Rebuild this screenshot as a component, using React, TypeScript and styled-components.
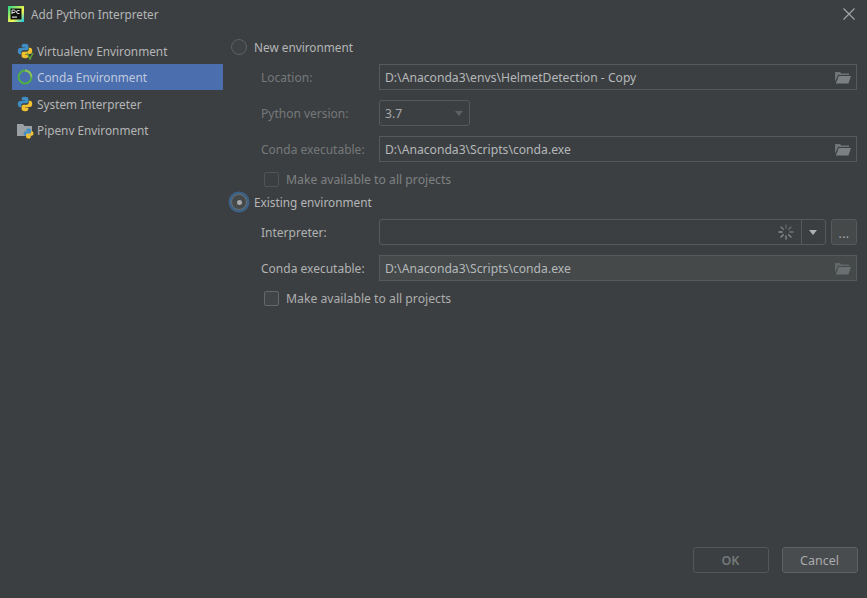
import React from 'react';
import styled, { createGlobalStyle } from 'styled-components';

const GlobalStyle = createGlobalStyle`
  html, body {
    margin: 0;
    padding: 0;
    background: #3c3f41;
  }
  * {
    box-sizing: border-box;
  }
`;

const Dialog = styled.div`
  width: 867px;
  height: 598px;
  display: flex;
  flex-direction: column;
  background: #3c3f41;
  color: #bbbbbb;
  font-family: 'Noto Sans', 'Open Sans', sans-serif;
  font-size: 12px;
  overflow: hidden;
`;

const TitleBar = styled.div`
  height: 38px;
  flex: none;
  display: flex;
  align-items: center;
  padding: 0 12px 10px 8px;
  gap: 7px;
`;

const Title = styled.span`
  flex: 1;
  font-size: 11.7px;
  color: #b4b6b7;
`;

const Body = styled.div`
  flex: 1;
  display: flex;
  min-height: 0;
`;

const Sidebar = styled.ul`
  width: 210.5px;
  margin: -0.4px 0 0 12px;
  padding: 0;
  list-style: none;
  flex: none;
`;

const SidebarItem = styled.li<{ $selected?: boolean }>`
  height: 26.4px;
  display: flex;
  align-items: center;
  gap: 4px;
  padding-left: 4px;
  font-size: 11.8px;
  background: ${(p) => (p.$selected ? '#4b6eaf' : 'transparent')};
  color: ${(p) => (p.$selected ? '#c0cadb' : '#b4b6b7')};
`;

const Main = styled.div`
  flex: 1;
  padding: 0 10px 0 8.5px;
  display: flex;
  flex-direction: column;
`;

const RadioRow = styled.label`
  display: flex;
  align-items: center;
  gap: 7px;
  height: 18px;
  font-size: 11.8px;
  color: #b4b6b7;
`;

const Radio = styled.span<{ $checked?: boolean }>`
  width: 16px;
  height: 16px;
  flex: none;
  border-radius: 50%;
  display: flex;
  align-items: center;
  justify-content: center;
  border: 1px solid ${(p) => (p.$checked ? '#6b6f71' : '#5e6162')};
  background: ${(p) => (p.$checked ? '#45494a' : '#3f4244')};
  box-shadow: ${(p) => (p.$checked ? '0 0 0 2.5px #3d6185' : 'none')};
  &::after {
    content: '';
    display: ${(p) => (p.$checked ? 'block' : 'none')};
    width: 5px;
    height: 5px;
    border-radius: 50%;
    background: #a8a9aa;
  }
`;

const Group = styled.div`
  display: grid;
  grid-template-columns: 118px 1fr;
  row-gap: 10px;
  margin-top: 8px;
  padding-left: 30px;
  align-items: center;
`;

const Label = styled.span<{ $disabled?: boolean }>`
  color: ${(p) => (p.$disabled ? '#74787a' : '#b0b2b3')};
`;

const Field = styled.div<{ $disabled?: boolean }>`
  height: 26px;
  display: flex;
  align-items: center;
  padding: 0 5px;
  font-size: 12.15px;
  border: 1px solid #565a5b;
  background: ${(p) => (p.$disabled ? '#3c3f41' : '#45494a')};
  color: #b4b8ba;
`;

const FieldText = styled.span`
  flex: 1;
`;

const VersionSelect = styled.div`
  width: 91px;
  height: 26px;
  display: flex;
  align-items: center;
  justify-content: space-between;
  padding: 0 5px;
  font-size: 12.15px;
  border: 1px solid #565a5b;
  border-radius: 3px;
  color: #a6a9ab;
`;

const Caret = styled.span<{ $color?: string }>`
  width: 0;
  height: 0;
  margin-right: 1px;
  border-left: 4.5px solid transparent;
  border-right: 4.5px solid transparent;
  border-top: 5px solid ${(p) => p.$color ?? '#5d6162'};
`;

const InterpreterRow = styled.div`
  display: flex;
  gap: 5px;
`;

const InterpreterCombo = styled.div`
  flex: 1;
  height: 26px;
  display: flex;
  align-items: center;
  border: 1px solid #565a5b;
  border-radius: 3px;
`;

const ComboInput = styled.div`
  flex: 1;
  height: 100%;
  display: flex;
  align-items: center;
  justify-content: flex-end;
  padding-right: 7px;
  border-right: 1px solid #565a5b;
`;

const ComboArrow = styled.div`
  width: 23px;
  display: flex;
  justify-content: center;
`;

const MoreButton = styled.button`
  width: 26px;
  height: 26px;
  padding: 0 0 4px;
  border: 1px solid #565a5b;
  border-radius: 3px;
  background: #45494a;
  color: #a9adaf;
  font: inherit;
  font-size: 12px;
  line-height: 1;
  display: flex;
  align-items: flex-end;
  justify-content: center;
  letter-spacing: 0.5px;
`;

const CheckRow = styled.label<{ $disabled?: boolean }>`
  display: flex;
  align-items: center;
  gap: 7px;
  height: 18px;
  margin: 8px 0 0 33px;
  font-size: 12.2px;
  color: ${(p) => (p.$disabled ? '#7d8183' : '#acaeaf')};
`;

const Checkbox = styled.span<{ $disabled?: boolean }>`
  width: 15px;
  height: 15px;
  border-radius: 2px;
  border: 1px solid ${(p) => (p.$disabled ? '#505354' : '#64686a')};
  background: ${(p) => (p.$disabled ? '#3c3f41' : '#424547')};
`;

const Spacer = styled.div<{ $h: number }>`
  height: ${(p) => p.$h}px;
  flex: none;
`;

const Footer = styled.div`
  height: 38px;
  flex: none;
  display: flex;
  justify-content: flex-end;
  gap: 13px;
  padding: 0 9.5px 0 0;
  margin-bottom: 13px;
`;

const DialogButton = styled.button<{ $disabled?: boolean }>`
  width: 76px;
  height: 26px;
  border-radius: 3px;
  border: 1px solid ${(p) => (p.$disabled ? '#54585a' : '#5e6264')};
  background: ${(p) => (p.$disabled ? '#3c3f41' : '#494c4e')};
  color: ${(p) => (p.$disabled ? '#74787a' : '#a9abad')};
  font: inherit;
  font-size: 12.5px;
  font-weight: ${(p) => (p.$disabled ? 600 : 400)};
`;

const IconBox = styled.span`
  position: relative;
  width: 17px;
  height: 17px;
  flex: none;
  display: flex;
  align-items: center;
  justify-content: center;
  & > svg + svg {
    position: absolute;
    right: -1px;
    bottom: -1px;
  }
`;

const PyCharmIcon = () => (
  <svg width="16" height="16" viewBox="0 0 16 16">
    <defs>
      <linearGradient id="pc" x1="0" y1="0" x2="1" y2="1">
        <stop offset="0" stopColor="#21d789" />
        <stop offset="0.6" stopColor="#fcf84a" />
        <stop offset="1" stopColor="#07c3f2" />
      </linearGradient>
    </defs>
    <rect width="16" height="16" fill="url(#pc)" />
    <rect x="2.5" y="2.5" width="11" height="11" fill="#111" />
    <rect x="4" y="10.5" width="5" height="1.2" fill="#ddd" />
    <path d="M4 8V4h2a1.2 1.2 0 0 1 0 2.6H4M11.5 4.5H10a1.5 1.5 0 0 0 0 3h1.5" fill="none" stroke="#ddd" strokeWidth="1" />
  </svg>
);

const PythonIcon = ({ size = 16 }: { size?: number }) => (
  <svg width={size} height={size} viewBox="0 0 16 16">
    <path d="M8 .8c-3 0-3.3 1.1-3.3 2.2v1.4H8v.6H3C1.7 5 .8 6 .8 8s.9 3.2 2.2 3.2h1.2V9.5c0-1.2 1-2.2 2.2-2.2h3.2c1 0 1.8-.8 1.8-1.8V3C11.400 1.600 10.200.8 8 .8z" fill="#3f8dc5" />
    <path d="M8 15.200c3 0 3.300-1.100 3.300-2.200v-1.400H8V11h5c1.300 0 2.200-1 2.200-3s-.9-3.200-2.200-3.200h-1.200v1.700c0 1.200-1 2.200-2.200 2.200H6.400c-1 0-1.800.8-1.800 1.800V13c0 1.400 1.200 2.200 3.400 2.200z" fill="#f2c12e" />
  </svg>
);

const VirtualenvIcon = () => (
  <IconBox>
    <PythonIcon />
    <svg width="8" height="8" viewBox="0 0 8 8">
      <path d="M1 1l3 6 3-6" fill="none" stroke="#5fa03c" strokeWidth="1.500" />
    </svg>
  </IconBox>
);

const CondaIcon = () => (
  <IconBox>
    <svg width="16" height="16" viewBox="0 0 16 16">
      <circle cx="8" cy="8" r="6.400" fill="none" stroke="#4fae46" strokeWidth="2" />
      <path d="M8 1.600A6.400 6.400 0 0 1 14.400 8" fill="none" stroke="#8fbf5a" strokeWidth="2" />
    </svg>
  </IconBox>
);

const PipenvIcon = () => (
  <IconBox>
    <svg width="16" height="14" viewBox="0 0 16 14">
      <path d="M0 1h6l1.500 2H15v10H0z" fill="#9aa0a3" />
    </svg>
    <PythonIcon size={11} />
  </IconBox>
);

const FolderIcon = ({ dim }: { dim?: boolean }) => (
  <svg width="16" height="13" viewBox="0 0 16 13" opacity={dim ? 0.7 : 1}>
    <path d="M0 1h5l1.200 1.500H14V4H3.200L0 10.500z" fill="#6f7476" />
    <path d="M3.800 5H16l-2.600 7.500H.8z" fill="#7b8183" />
  </svg>
);

const Spinner = () => (
  <svg width="16" height="16" viewBox="0 0 16 16" stroke="#8b8e90" strokeWidth="1.300" strokeLinecap="round">
    <path d="M8 1v3.200" opacity="0.5" />
    <path d="M8 11.800V15" />
    <path d="M1 8h3.200" />
    <path d="M11.800 8H15" opacity="0.7" />
    <path d="M3 3l2.300 2.300" opacity="0.8" />
    <path d="M10.700 10.700L13 13" opacity="0.9" />
    <path d="M13 3l-2.300 2.300" opacity="0.6" />
    <path d="M5.300 10.700L3 13" />
  </svg>
);

const CloseIcon = () => (
  <svg width="12" height="12" viewBox="0 0 12 12" stroke="#a6a8aa" strokeWidth="1.100">
    <path d="M.5.500l11 11M11.500.5l-11 11" />
  </svg>
);

export default function App() {
  return (
    <Dialog>
      <GlobalStyle />
      <TitleBar>
        <PyCharmIcon />
        <Title>Add Python Interpreter</Title>
        <CloseIcon />
      </TitleBar>
      <Body>
        <Sidebar>
          <SidebarItem>
            <VirtualenvIcon />
            Virtualenv Environment
          </SidebarItem>
          <SidebarItem $selected>
            <CondaIcon />
            Conda Environment
          </SidebarItem>
          <SidebarItem>
            <IconBox>
              <PythonIcon />
            </IconBox>
            System Interpreter
          </SidebarItem>
          <SidebarItem>
            <PipenvIcon />
            Pipenv Environment
          </SidebarItem>
        </Sidebar>
        <Main>
          <RadioRow>
            <Radio />
            New environment
          </RadioRow>
          <Group>
            <Label $disabled>Location:</Label>
            <Field $disabled>
              <FieldText>D:\Anaconda3\envs\HelmetDetection - Copy</FieldText>
              <FolderIcon />
            </Field>
            <Label $disabled>Python version:</Label>
            <VersionSelect>
              3.7
              <Caret />
            </VersionSelect>
            <Label $disabled>Conda executable:</Label>
            <Field $disabled>
              <FieldText>D:\Anaconda3\Scripts\conda.exe</FieldText>
              <FolderIcon />
            </Field>
          </Group>
          <CheckRow $disabled>
            <Checkbox $disabled />
            Make available to all projects
          </CheckRow>
          <Spacer $h={5} />
          <RadioRow>
            <Radio $checked />
            Existing environment
          </RadioRow>
          <Group>
            <Label>Interpreter:</Label>
            <InterpreterRow>
              <InterpreterCombo>
                <ComboInput>
                  <Spinner />
                </ComboInput>
                <ComboArrow>
                  <Caret $color="#aeb0b2" />
                </ComboArrow>
              </InterpreterCombo>
              <MoreButton>...</MoreButton>
            </InterpreterRow>
            <Label>Conda executable:</Label>
            <Field>
              <FieldText>D:\Anaconda3\Scripts\conda.exe</FieldText>
              <FolderIcon dim />
            </Field>
          </Group>
          <CheckRow>
            <Checkbox />
            Make available to all projects
          </CheckRow>
        </Main>
      </Body>
      <Footer>
        <DialogButton $disabled>OK</DialogButton>
        <DialogButton>Cancel</DialogButton>
      </Footer>
    </Dialog>
  );
}
